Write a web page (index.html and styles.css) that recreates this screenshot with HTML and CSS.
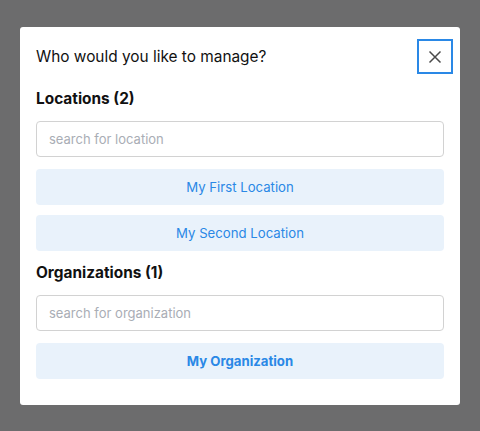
FILE: index.html
```html
<!DOCTYPE html>
<html>
<head>
<meta charset="utf-8">
<link rel="stylesheet" href="styles.css">
</head>
<body>
<div class="overlay">
  <div class="modal">
    <div class="header">
      <div class="title">Who would you like to manage?</div>
      <button class="close" aria-label="Close">
        <svg width="14" height="14" viewBox="0 0 14 14"><path d="M1.5 1.5 L12.5 12.5 M12.5 1.5 L1.5 12.5" stroke="#4a4a4a" stroke-width="1.5" fill="none"/></svg>
      </button>
    </div>
    <div class="section-title first">Locations (2)</div>
    <input class="search" type="text" placeholder="search for location">
    <button class="item">My First Location</button>
    <button class="item">My Second Location</button>
    <div class="section-title">Organizations (1)</div>
    <input class="search" type="text" placeholder="search for organization">
    <button class="item item-bold">My Organization</button>
  </div>
</div>
</body>
</html>
```
FILE: styles.css
```css
html, body {
  margin: 0;
  padding: 0;
  height: 100%;
}
body {
  background: #6c6c6d;
  font-family: Inter, "Noto Sans", sans-serif;
}
.overlay {
  padding: 27px 20px 0 20px;
}
.modal {
  background: #fff;
  border-radius: 3px;
  padding: 12px 16px 26px 16px;
  display: flex;
  flex-direction: column;
}
.header {
  display: flex;
  align-items: center;
  justify-content: space-between;
  margin-right: -9px;
}
.title {
  font-size: 15.4px;
  color: #111;
}
.close {
  width: 36px;
  height: 35px;
  border: 2px solid #2a88e6;
  background: #fff;
  padding: 0;
  display: flex;
  align-items: center;
  justify-content: center;
  box-sizing: border-box;
}
.section-title {
  font-size: 15.4px;
  font-weight: 700;
  color: #111;
  margin-top: 12px;
  height: 20px;
  line-height: 20px;
}
.section-title.first {
  margin-top: 15px;
}
.search {
  margin-top: 12px;
  height: 36px;
  box-sizing: border-box;
  border: 1px solid #d2d2d2;
  border-radius: 4px;
  padding: 0 12px;
  font-family: inherit;
  font-size: 13px;
  color: #333;
  outline: none;
}
.search::placeholder {
  color: #a9adb5;
}
.item {
  margin-top: 12px;
  height: 36px;
  border: none;
  border-radius: 4px;
  background: #e9f2fb;
  color: #2a88e6;
  font-family: inherit;
  font-size: 13.2px;
  padding: 0;
}
.item + .item {
  margin-top: 10px;
}
.item-bold {
  font-weight: 700;
}
```
